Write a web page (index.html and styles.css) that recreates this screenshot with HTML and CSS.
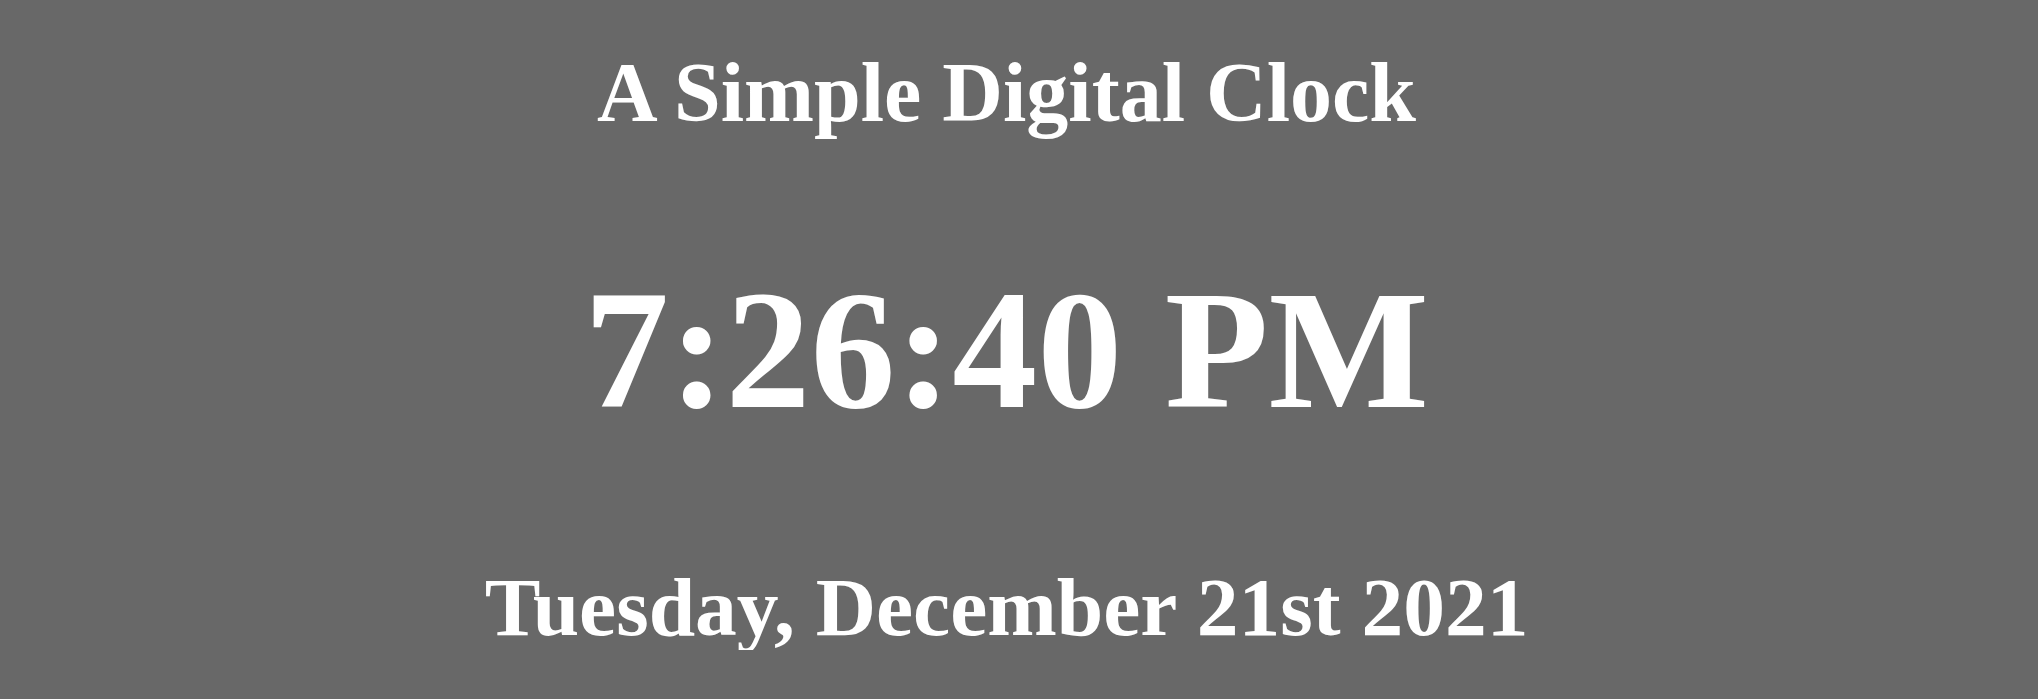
FILE: index.html
```html
<!DOCTYPE html>
<html lang="en">
<head>
  <meta charset="UTF-8" />
  <title>Digital Clock</title>
  <link rel="stylesheet" href="styles.css">
</head>
<body>

  <div class="clock-page">
    <h1 class="title">A Simple Digital Clock</h1>
    <div id="time" class="time">7:26:40 PM</div>
    <div id="date" class="date">Tuesday, December 21st 2021</div>
  </div>

</body>
</html>
```

FILE: styles.css
```css
body {
  margin: 0;
  background-color: #686868;
  color: white;
  font-family: 'Liberation Serif', 'Times New Roman', serif;
  font-weight: bold;
}

.clock-page {
  display: flex;
  flex-direction: column;
  align-items: center;
  padding-top: 51px;
  padding-right: 25px;
  gap: 130px;
}

.title {
  margin: 0;
  font-size: 84px;
  line-height: 1;
}

.time {
  font-size: 170px;
  line-height: 1;
}

.date {
  font-size: 83.5px;
  line-height: 1;
  margin-top: 1px;
}
```
